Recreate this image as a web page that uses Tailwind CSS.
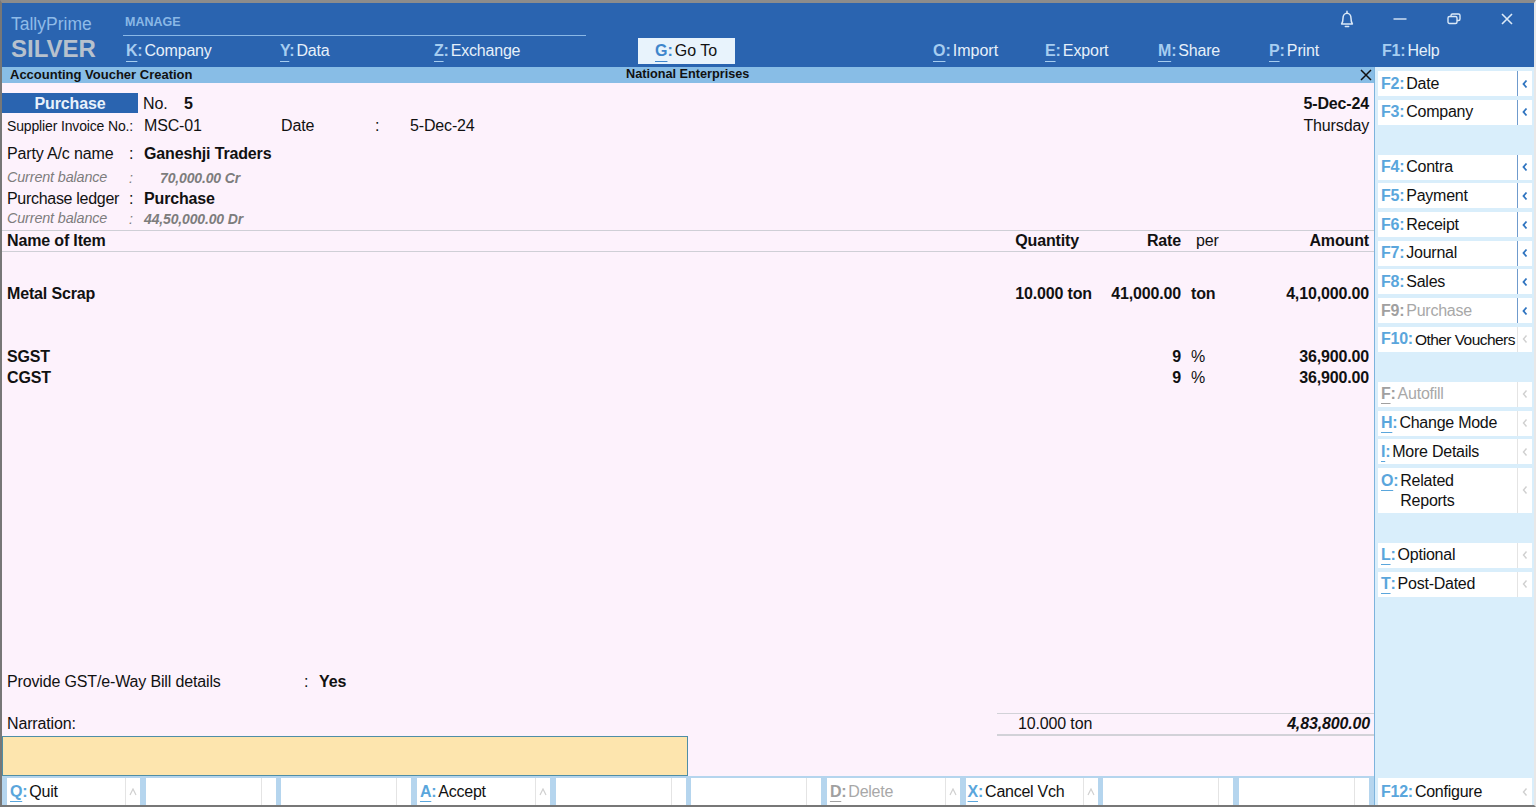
<!DOCTYPE html>
<html lang="en">
<head>
  <meta charset="UTF-8">
  <title>TallyPrime - Accounting Voucher Creation</title>
  <script src="https://cdn.jsdelivr.net/npm/@tailwindcss/browser@4"></script>
</head>
<body class="h-screen w-screen overflow-hidden bg-white font-['Liberation_Sans',Arial,sans-serif] text-[16px] text-[#111]">
<div class="flex h-[807px] w-[1536px] flex-col border-t-[3px] border-b-2 border-l-2 border-r-2 border-t-[#8c8c8c] border-b-[#777] border-l-[#777] border-r-[#e8e8e8]">

  <!-- top menu -->
  <header class="flex h-[64px] shrink-0 bg-[#2a64b0]">
    <div class="flex w-[121px] shrink-0 flex-col pl-[9px]">
      <div class="mt-[10px] h-[22px] text-[17.5px] leading-[22px] text-[#8fbbe8]">TallyPrime</div>
      <div class="mt-[-1px] text-[24px] font-bold leading-[30px] text-[#b7c1cd]">SILVER</div>
    </div>
    <div class="flex flex-1 flex-col">
      <div class="flex h-[32px] shrink-0">
        <div class="h-[33px] w-[463px] border-b border-[#8ab8e6] pl-[2px] pt-[12px] text-[12.5px] font-bold leading-[14px] text-[#8ab8e6]">MANAGE</div>
        <div class="ml-auto flex text-[#dbe9f7]">
          <div class="flex h-full w-[53.5px] items-center justify-center">
            <svg class="h-[20px] w-[20px]" viewBox="0 0 24 24" fill="none" stroke="currentColor" stroke-width="1.8" stroke-linejoin="round" stroke-linecap="round"><path d="M5.5 18c1.2-1.6 1.7-3.4 1.7-7C7.2 7.6 9.3 5 12 5s4.800 2.600 4.800 6c0 3.600.5 5.400 1.700 7H5.500Z"/><path d="M12 2.800V5M10 21h4"/></svg>
          </div>
          <div class="flex h-full w-[53.5px] items-center justify-center">
            <svg class="h-[14px] w-[14px]" viewBox="0 0 14 14" fill="none" stroke="currentColor" stroke-width="1.400"><path d="M0.500 7h13"/></svg>
          </div>
          <div class="flex h-full w-[53.5px] items-center justify-center">
            <svg class="h-[14px] w-[14px]" viewBox="0 0 14 14" fill="none" stroke="currentColor" stroke-width="1.400"><rect x="1" y="4.500" width="9" height="7" rx="1.500"/><path d="M4 4.500V3.500a1.500 1.500 0 0 1 1.500-1.500H11.500a1.500 1.500 0 0 1 1.500 1.500V7a1.500 1.500 0 0 1-1.500 1.500H10"/></svg>
          </div>
          <div class="flex h-full w-[53.5px] items-center justify-center">
            <svg class="h-[14px] w-[14px]" viewBox="0 0 14 14" fill="none" stroke="currentColor" stroke-width="1.600"><path d="M2 2l10 10M12 2L2 12"/></svg>
          </div>
        </div>
      </div>
      <nav class="flex h-[32px] items-center text-[#e6f0fa]">
        <div class="w-[154px] pl-[3px] tracking-[-0.2px]"><u class="font-bold text-[#a6cdf0] underline-offset-[5px]">K</u><b class="mr-[2px] text-[#a6cdf0]">:</b>Company</div>
        <div class="w-[154px] pl-[3px] tracking-[-0.2px]"><u class="font-bold text-[#a6cdf0] underline-offset-[5px]">Y</u><b class="mr-[2px] text-[#a6cdf0]">:</b>Data</div>
        <div class="w-[154px] pl-[3px] tracking-[-0.2px]"><u class="font-bold text-[#a6cdf0] underline-offset-[5px]">Z</u><b class="mr-[2px] text-[#a6cdf0]">:</b>Exchange</div>
        <div class="ml-[53px] flex h-[26px] w-[97px] items-center bg-[#e8f3fc] pl-[17px] text-[#111]"><u class="font-bold text-[#3f86cc] underline-offset-[5px]">G</u><b class="mr-[2px] text-[#3f86cc]">:</b>Go To</div>
        <div class="ml-[198px] w-[112px]"><u class="font-bold text-[#a6cdf0] underline-offset-[5px]">O</u><b class="mr-[2px] text-[#a6cdf0]">:</b>Import</div>
        <div class="w-[113px] tracking-[-0.1px]"><u class="font-bold text-[#a6cdf0] underline-offset-[5px]">E</u><b class="mr-[2px] text-[#a6cdf0]">:</b>Export</div>
        <div class="w-[111px] tracking-[-0.2px]"><u class="font-bold text-[#a6cdf0] underline-offset-[5px]">M</u><b class="mr-[2px] text-[#a6cdf0]">:</b>Share</div>
        <div class="w-[113px] tracking-[-0.1px]"><u class="font-bold text-[#a6cdf0] underline-offset-[5px]">P</u><b class="mr-[2px] text-[#a6cdf0]">:</b>Print</div>
        <div class="tracking-[-0.2px]"><b class="mr-[2px] text-[#a6cdf0]">F1:</b>Help</div>
      </nav>
    </div>
  </header>

  <div class="flex min-h-0 flex-1">
    <!-- voucher -->
    <main class="flex w-[1372px] shrink-0 flex-col bg-[#fdf2fc] tracking-[-0.15px]">
      <div class="relative flex h-[16px] shrink-0 items-center bg-[#88bde6] pl-[8px] font-bold tracking-normal">
        <span class="text-[13px]">Accounting Voucher Creation</span>
        <span class="absolute left-[624px] text-[12.7px]">National Enterprises</span>
        <svg class="absolute right-[2px] top-[2px] h-[12px] w-[12px]" viewBox="0 0 12 12" fill="none" stroke="#111" stroke-width="1.500"><path d="M1 1l10 10M11 1L1 11"/></svg>
      </div>

      <div class="mt-[10px] flex h-[20px] items-center pr-[5px]">
        <div class="flex h-full w-[136px] items-center justify-center bg-[#2a64b0] pt-[1px] font-bold text-[#e8f1fb]">Purchase</div>
        <span class="ml-[5px] w-[41px] pt-[1px]">No.</span><b class="pt-[1px]">5</b>
        <b class="ml-auto pt-[1px]">5-Dec-24</b>
      </div>
      <div class="mt-[1px] flex h-[22px] items-center pl-[5px] pr-[5px] pt-[2px]">
        <span class="w-[137px] text-[14px] tracking-[-0.15px]">Supplier Invoice No.:</span>
        <span class="w-[137px]">MSC-01</span>
        <span class="w-[94px]">Date</span>
        <span class="w-[35px]">:</span>
        <span>5-Dec-24</span>
        <span class="ml-auto">Thursday</span>
      </div>
      <div class="mt-[6px] flex h-[22px] items-center pl-[5px] pt-[2px]">
        <span class="w-[122px]">Party A/c name</span><span class="w-[15px]">:</span><b>Ganeshji Traders</b>
      </div>
      <div class="mt-[2px] flex h-[22px] items-center pl-[5px] pt-[2px] text-[14px] italic text-[#7d7d7d]">
        <span class="w-[122px] text-[14.4px]">Current balance</span><span class="w-[15px]">:</span><b class="pl-[16px]">70,000.00 Cr</b>
      </div>
      <div class="flex h-[20px] items-center pl-[5px] pt-[2px]">
        <span class="w-[122px] tracking-[-0.3px]">Purchase ledger</span><span class="w-[15px]">:</span><b>Purchase</b>
      </div>
      <div class="flex h-[20px] items-center pl-[5px] pt-[2px] text-[14px] italic text-[#7d7d7d]">
        <span class="w-[122px] text-[14.4px]">Current balance</span><span class="w-[15px]">:</span><b>44,50,000.00 Dr</b>
      </div>

      <div class="mt-[2px] flex h-[22px] items-center border-t border-b border-[#cfcfd6] pl-[5px] pr-[5px]">
        <b class="flex-1">Name of Item</b>
        <b class="w-[90px] pr-[13px] text-right">Quantity</b>
        <b class="w-[89px] text-right">Rate</b>
        <span class="w-[81px] pl-[15px]">per</span>
        <b class="w-[107px] text-right">Amount</b>
      </div>

      <div class="mt-[30px] flex h-[22px] items-center pl-[5px] pr-[5px] pt-[2px] font-bold">
        <span class="flex-1">Metal Scrap</span>
        <span class="w-[90px] text-right">10.000 ton</span>
        <span class="w-[89px] text-right">41,000.00</span>
        <span class="w-[81px] pl-[10px]">ton</span>
        <span class="w-[107px] text-right">4,10,000.00</span>
      </div>
      <div class="mt-[41px] flex h-[22px] items-center pl-[5px] pr-[5px] pt-[2px]">
        <b class="flex-1">SGST</b>
        <b class="w-[89px] text-right">9</b>
        <span class="w-[81px] pl-[10px]">%</span>
        <b class="w-[107px] text-right">36,900.00</b>
      </div>
      <div class="flex h-[21px] items-center pl-[5px] pr-[5px]">
        <b class="flex-1">CGST</b>
        <b class="w-[89px] text-right">9</b>
        <span class="w-[81px] pl-[10px]">%</span>
        <b class="w-[107px] text-right">36,900.00</b>
      </div>

      <div class="mt-auto flex h-[22px] items-center pl-[5px]">
        <span class="w-[297px]">Provide GST/e-Way Bill details</span><span class="w-[15px]">:</span><b>Yes</b>
      </div>
      <div class="mt-[20px] flex h-[23px] items-center pl-[5px]">
        <span class="w-[990px] pb-[2px]">Narration:</span>
        <div class="flex h-full flex-1 items-center border-t border-b-2 border-[#d2d2d8] pl-[21px] pr-[4px]">
          <span>10.000 ton</span>
          <b class="ml-auto italic">4,83,800.00</b>
        </div>
      </div>
      <div class="h-[40px] w-[686px] shrink-0 border border-[#4f8ea6] bg-[#fde5ae]"></div>

      <!-- bottom buttons -->
      <div class="flex h-[29px] shrink-0 gap-[5.5px] bg-[#b5d5ee] px-[5px] pt-[2px] tracking-[-0.25px]">
        <div class="flex flex-1 items-center bg-white pl-[3px]"><u class="font-bold text-[#5aa6dc] underline-offset-[4px]">Q</u><b class="mr-[2px] text-[#5aa6dc]">:</b>Quit<span class="ml-auto flex h-full w-[15px] items-center justify-center border-l border-[#e4e4e4]"><svg class="h-[8px] w-[8px]" viewBox="0 0 8 8" fill="none" stroke="#d0d0d0" stroke-width="1.200"><path d="M1 7l3-6 3 6"/></svg></span></div>
        <div class="flex flex-1 items-center bg-white"><span class="ml-auto h-full w-[15px] border-l border-[#e4e4e4]"></span></div>
        <div class="flex flex-1 items-center bg-white"><span class="ml-auto h-full w-[15px] border-l border-[#e4e4e4]"></span></div>
        <div class="flex flex-1 items-center bg-white pl-[3px]"><u class="font-bold text-[#5aa6dc] underline-offset-[4px]">A</u><b class="mr-[2px] text-[#5aa6dc]">:</b>Accept<span class="ml-auto flex h-full w-[15px] items-center justify-center border-l border-[#e4e4e4]"><svg class="h-[8px] w-[8px]" viewBox="0 0 8 8" fill="none" stroke="#d0d0d0" stroke-width="1.200"><path d="M1 7l3-6 3 6"/></svg></span></div>
        <div class="flex flex-1 items-center bg-white"><span class="ml-auto h-full w-[15px] border-l border-[#e4e4e4]"></span></div>
        <div class="flex flex-1 items-center bg-white"><span class="ml-auto h-full w-[15px] border-l border-[#e4e4e4]"></span></div>
        <div class="flex flex-1 items-center bg-white pl-[3px] text-[#a8a8a8]"><u class="font-bold text-[#a0a0a0] underline-offset-[4px]">D</u><b class="mr-[2px] text-[#a0a0a0]">:</b>Delete<span class="ml-auto flex h-full w-[15px] items-center justify-center border-l border-[#e4e4e4]"><svg class="h-[8px] w-[8px]" viewBox="0 0 8 8" fill="none" stroke="#d0d0d0" stroke-width="1.200"><path d="M1 7l3-6 3 6"/></svg></span></div>
        <div class="flex flex-1 items-center bg-white pl-[2px]"><u class="font-bold text-[#5aa6dc] underline-offset-[4px]">X</u><b class="mr-[2px] text-[#5aa6dc]">:</b>Cancel Vch<span class="ml-auto flex h-full w-[15px] items-center justify-center border-l border-[#e4e4e4]"><svg class="h-[8px] w-[8px]" viewBox="0 0 8 8" fill="none" stroke="#d0d0d0" stroke-width="1.200"><path d="M1 7l3-6 3 6"/></svg></span></div>
        <div class="flex flex-1 items-center bg-white"><span class="ml-auto h-full w-[15px] border-l border-[#e4e4e4]"></span></div>
        <div class="flex flex-1 items-center bg-white"><span class="ml-auto h-full w-[15px] border-l border-[#e4e4e4]"></span></div>
      </div>
    </main>

    <!-- right button bar -->
    <aside class="flex flex-1 flex-col border-l border-[#7db3dc] bg-[#d9eefb] pl-[3px] pr-[2px] pt-[4px] tracking-[-0.25px]">
      <div class="flex flex-col gap-[3.7px]">
        <div class="flex h-[25px] items-center bg-white pl-[3px]"><b class="mr-[2px] text-[#5aa6dc]">F2:</b>Date<span class="ml-auto flex h-full w-[15px] items-center justify-center border-l border-[#6f9bcd]"><svg class="h-[10px] w-[6px]" viewBox="0 0 6 10" fill="none" stroke="#2f74c0" stroke-width="1.800"><path d="M4.500 1.500L1.500 5l3 3.500"/></svg></span></div>
        <div class="flex h-[25px] items-center bg-white pl-[3px]"><b class="mr-[2px] text-[#5aa6dc]">F3:</b>Company<span class="ml-auto flex h-full w-[15px] items-center justify-center border-l border-[#6f9bcd]"><svg class="h-[10px] w-[6px]" viewBox="0 0 6 10" fill="none" stroke="#2f74c0" stroke-width="1.800"><path d="M4.500 1.500L1.500 5l3 3.500"/></svg></span></div>
      </div>
      <div class="mt-[30px] flex flex-col gap-[3.7px]">
        <div class="flex h-[25px] items-center bg-white pl-[3px]"><b class="mr-[2px] text-[#5aa6dc]">F4:</b>Contra<span class="ml-auto flex h-full w-[15px] items-center justify-center border-l border-[#6f9bcd]"><svg class="h-[10px] w-[6px]" viewBox="0 0 6 10" fill="none" stroke="#2f74c0" stroke-width="1.800"><path d="M4.500 1.500L1.500 5l3 3.500"/></svg></span></div>
        <div class="flex h-[25px] items-center bg-white pl-[3px]"><b class="mr-[2px] text-[#5aa6dc]">F5:</b>Payment<span class="ml-auto flex h-full w-[15px] items-center justify-center border-l border-[#6f9bcd]"><svg class="h-[10px] w-[6px]" viewBox="0 0 6 10" fill="none" stroke="#2f74c0" stroke-width="1.800"><path d="M4.500 1.500L1.500 5l3 3.500"/></svg></span></div>
        <div class="flex h-[25px] items-center bg-white pl-[3px]"><b class="mr-[2px] text-[#5aa6dc]">F6:</b>Receipt<span class="ml-auto flex h-full w-[15px] items-center justify-center border-l border-[#6f9bcd]"><svg class="h-[10px] w-[6px]" viewBox="0 0 6 10" fill="none" stroke="#2f74c0" stroke-width="1.800"><path d="M4.500 1.500L1.500 5l3 3.500"/></svg></span></div>
        <div class="flex h-[25px] items-center bg-white pl-[3px]"><b class="mr-[2px] text-[#5aa6dc]">F7:</b>Journal<span class="ml-auto flex h-full w-[15px] items-center justify-center border-l border-[#6f9bcd]"><svg class="h-[10px] w-[6px]" viewBox="0 0 6 10" fill="none" stroke="#2f74c0" stroke-width="1.800"><path d="M4.500 1.500L1.500 5l3 3.500"/></svg></span></div>
        <div class="flex h-[25px] items-center bg-white pl-[3px]"><b class="mr-[2px] text-[#5aa6dc]">F8:</b>Sales<span class="ml-auto flex h-full w-[15px] items-center justify-center border-l border-[#6f9bcd]"><svg class="h-[10px] w-[6px]" viewBox="0 0 6 10" fill="none" stroke="#2f74c0" stroke-width="1.800"><path d="M4.500 1.500L1.500 5l3 3.500"/></svg></span></div>
        <div class="flex h-[25px] items-center bg-white pl-[3px] text-[#a8a8a8]"><b class="mr-[2px] text-[#a0a0a0]">F9:</b>Purchase<span class="ml-auto flex h-full w-[15px] items-center justify-center border-l border-[#6f9bcd]"><svg class="h-[10px] w-[6px]" viewBox="0 0 6 10" fill="none" stroke="#2f74c0" stroke-width="1.800"><path d="M4.500 1.500L1.500 5l3 3.500"/></svg></span></div>
        <div class="flex h-[25px] items-center bg-white pl-[3px]"><b class="mr-[2px] text-[#5aa6dc]">F10:</b><span class="whitespace-nowrap text-[15.5px] tracking-[-0.55px]">Other Vouchers</span><span class="ml-auto flex h-full w-[15px] items-center justify-center border-l border-[#e4e4e4]"><svg class="h-[10px] w-[6px]" viewBox="0 0 6 10" fill="none" stroke="#d0d0d0" stroke-width="1.400"><path d="M4.500 1.500L1.500 5l3 3.500"/></svg></span></div>
      </div>
      <div class="mt-[30px] flex flex-col gap-[3.7px]">
        <div class="flex h-[25px] items-center bg-white pl-[3px] text-[#a8a8a8]"><u class="font-bold text-[#a0a0a0] underline-offset-[4px]">F</u><b class="mr-[2px] text-[#a0a0a0]">:</b>Autofill<span class="ml-auto flex h-full w-[15px] items-center justify-center border-l border-[#e4e4e4]"><svg class="h-[10px] w-[6px]" viewBox="0 0 6 10" fill="none" stroke="#d0d0d0" stroke-width="1.400"><path d="M4.500 1.500L1.500 5l3 3.500"/></svg></span></div>
        <div class="flex h-[25px] items-center bg-white pl-[3px]"><u class="font-bold text-[#5aa6dc] underline-offset-[4px]">H</u><b class="mr-[2px] text-[#5aa6dc]">:</b>Change Mode<span class="ml-auto flex h-full w-[15px] items-center justify-center border-l border-[#e4e4e4]"><svg class="h-[10px] w-[6px]" viewBox="0 0 6 10" fill="none" stroke="#d0d0d0" stroke-width="1.400"><path d="M4.500 1.500L1.500 5l3 3.500"/></svg></span></div>
        <div class="flex h-[25px] items-center bg-white pl-[3px]"><u class="font-bold text-[#5aa6dc] underline-offset-[4px]">I</u><b class="mr-[2px] text-[#5aa6dc]">:</b>More Details<span class="ml-auto flex h-full w-[15px] items-center justify-center border-l border-[#e4e4e4]"><svg class="h-[10px] w-[6px]" viewBox="0 0 6 10" fill="none" stroke="#d0d0d0" stroke-width="1.400"><path d="M4.500 1.500L1.500 5l3 3.500"/></svg></span></div>
        <div class="flex h-[45px] bg-white pl-[3px] leading-[20px]"><div class="pt-[3px]"><u class="font-bold text-[#5aa6dc] underline-offset-[4px]">O</u><b class="mr-[2px] text-[#5aa6dc]">:</b></div><div class="pt-[3px]">Related<br>Reports</div><span class="ml-auto flex h-full w-[15px] items-center justify-center border-l border-[#e4e4e4]"><svg class="h-[10px] w-[6px]" viewBox="0 0 6 10" fill="none" stroke="#d0d0d0" stroke-width="1.400"><path d="M4.500 1.500L1.500 5l3 3.500"/></svg></span></div>
      </div>
      <div class="mt-[30px] flex flex-col gap-[3.7px]">
        <div class="flex h-[25px] items-center bg-white pl-[3px]"><u class="font-bold text-[#5aa6dc] underline-offset-[4px]">L</u><b class="mr-[2px] text-[#5aa6dc]">:</b>Optional<span class="ml-auto flex h-full w-[15px] items-center justify-center border-l border-[#e4e4e4]"><svg class="h-[10px] w-[6px]" viewBox="0 0 6 10" fill="none" stroke="#d0d0d0" stroke-width="1.400"><path d="M4.500 1.500L1.500 5l3 3.500"/></svg></span></div>
        <div class="flex h-[25px] items-center bg-white pl-[3px]"><u class="font-bold text-[#5aa6dc] underline-offset-[4px]">T</u><b class="mr-[2px] text-[#5aa6dc]">:</b>Post-Dated<span class="ml-auto flex h-full w-[15px] items-center justify-center border-l border-[#e4e4e4]"><svg class="h-[10px] w-[6px]" viewBox="0 0 6 10" fill="none" stroke="#d0d0d0" stroke-width="1.400"><path d="M4.500 1.500L1.500 5l3 3.500"/></svg></span></div>
      </div>
      <div class="mt-auto flex h-[27px] shrink-0 items-center bg-white pl-[3px]"><b class="mr-[2px] text-[#5aa6dc]">F12:</b>Configure<span class="ml-auto flex h-full w-[15px] items-center justify-center"><svg class="h-[10px] w-[6px]" viewBox="0 0 6 10" fill="none" stroke="#d0d0d0" stroke-width="1.400"><path d="M4.500 1.500L1.500 5l3 3.500"/></svg></span></div>
    </aside>
  </div>
</div>
</body>
</html>
